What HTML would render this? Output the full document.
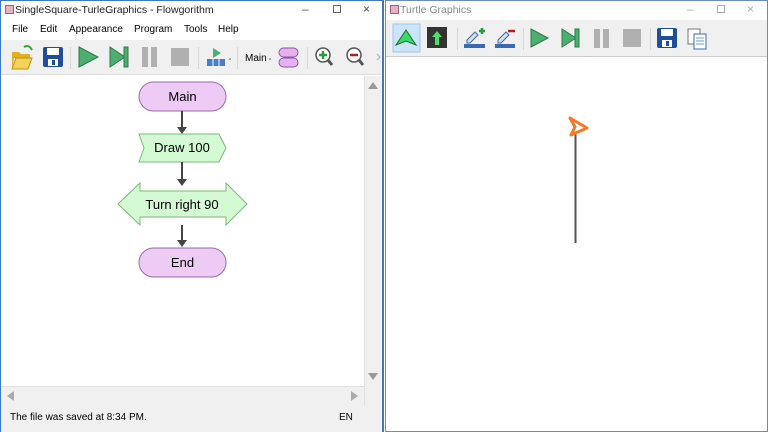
<!DOCTYPE html>
<html><head><meta charset="utf-8"><style>
*{margin:0;padding:0;box-sizing:border-box}
body{width:768px;height:432px;background:#fff;position:relative;overflow:hidden;font-family:"Liberation Sans",sans-serif;font-size:10px;color:#000}
.a{position:absolute}
.tb{background:#f0f0f0}
</style></head><body>
<!-- left window -->
<div class="a" style="left:0;top:0;width:384px;height:432px;border:1px solid #3c78c8;border-right:2px solid #3c78c8;background:#fff"></div>
<div class="a" style="left:5px;top:5px;width:9px;height:9px;background:#e8b0c0;border:1px solid #a06080"></div>
<div class="a" style="left:15px;top:4px;font-size:10.5px;color:#222">SingleSquare-TurleGraphics - Flowgorithm</div>
<div class="a" style="left:302px;top:2px;color:#555;font-size:12px">–</div>
<div class="a" style="left:333px;top:5px;width:8px;height:8px;border:1px solid #666"></div>
<div class="a" style="left:363px;top:2px;color:#555;font-size:12px">×</div>
<div class="a" style="left:12px;top:24px">File</div>
<div class="a" style="left:40px;top:24px">Edit</div>
<div class="a" style="left:69px;top:24px">Appearance</div>
<div class="a" style="left:134px;top:24px">Program</div>
<div class="a" style="left:184px;top:24px">Tools</div>
<div class="a" style="left:218px;top:24px">Help</div>
<div class="a tb" style="left:1px;top:40px;width:381px;height:35px;border-bottom:1px solid #ddd"></div>
<svg class="a" style="left:0;top:40px" width="382" height="34">
<path d="M12 12h7l2 2h9v4H14l-2 11z" fill="#e0b020"/><path d="M12 29l4-11h16l-4 11z" fill="#f4d35a" stroke="#c09010"/>
<path d="M24 7q5-3 8 3" stroke="#3a3" stroke-width="2" fill="none"/>
<rect x="43" y="7" width="20" height="20" rx="2" fill="#1f4f9a"/><rect x="47" y="8" width="12" height="7" fill="#fff"/><rect x="48" y="19" width="10" height="7" fill="#fff"/><rect x="52" y="20" width="3" height="5" fill="#1f4f9a"/>
<line x1="70.5" y1="7" x2="70.5" y2="29" stroke="#d8d8d8"/>
<path d="M79 7l19 10-19 10z" fill="#4caf70" stroke="#2a7a45"/>
<path d="M110 7l15 10-15 10z" fill="#4caf70" stroke="#2a7a45"/><rect x="124" y="7" width="4" height="20" fill="#4caf70" stroke="#2a7a45"/>
<rect x="142" y="7" width="6" height="20" fill="#b0b0b0"/><rect x="151" y="7" width="6" height="20" fill="#b0b0b0"/>
<rect x="171" y="8" width="18" height="18" fill="#b0b0b0"/>
<line x1="198.5" y1="7" x2="198.5" y2="29" stroke="#d8d8d8"/>
<path d="M213 8l8 5-8 5z" fill="#4caf70"/><rect x="207" y="19" width="18" height="7" fill="#4a7ec8"/><path d="M213 19v7M219 19v7" stroke="#fff"/>
<circle cx="230" cy="19" r="0.8" fill="#555"/>
<line x1="237.5" y1="7" x2="237.5" y2="29" stroke="#d8d8d8"/>
<text x="245" y="21" font-size="10" font-family="Liberation Sans">Main</text><circle cx="270" cy="19" r="0.8" fill="#555"/>
<rect x="279" y="8" width="19" height="9" rx="4.5" fill="#e8b0f0" stroke="#8a5aa0"/><rect x="279" y="18" width="19" height="9" rx="4.5" fill="#e8b0f0" stroke="#8a5aa0"/>
<line x1="307.5" y1="7" x2="307.5" y2="29" stroke="#d8d8d8"/>
<circle cx="323" cy="15" r="7" fill="#fff" stroke="#555" stroke-width="1.5"/><path d="M328 20l4 5" stroke="#555" stroke-width="3"/><path d="M319 15h8M323 11v8" stroke="#2a9a40" stroke-width="2.5"/>
<circle cx="354" cy="15" r="7" fill="#fff" stroke="#555" stroke-width="1.5"/><path d="M359 20l4 5" stroke="#555" stroke-width="3"/><path d="M350 15h8" stroke="#b02020" stroke-width="2.5"/>
<path d="M377 14l3 3-3 3" stroke="#aaa" fill="none"/>
</svg>
<!-- scrollbars -->
<div class="a tb" style="left:364px;top:76px;width:18px;height:329px;border-left:1px solid #e0e0e0"></div>
<div class="a" style="left:368px;top:82px;width:0;height:0;border-left:5px solid transparent;border-right:5px solid transparent;border-bottom:7px solid #999"></div>
<div class="a" style="left:368px;top:373px;width:0;height:0;border-left:5px solid transparent;border-right:5px solid transparent;border-top:7px solid #999"></div>
<div class="a tb" style="left:1px;top:386px;width:363px;height:19px;border-top:1px solid #e0e0e0"></div>
<div class="a" style="left:7px;top:391px;width:0;height:0;border-top:5px solid transparent;border-bottom:5px solid transparent;border-right:7px solid #aaa"></div>
<div class="a" style="left:351px;top:391px;width:0;height:0;border-top:5px solid transparent;border-bottom:5px solid transparent;border-left:7px solid #aaa"></div>
<div class="a tb" style="left:1px;top:405px;width:381px;height:27px"></div>
<div class="a" style="left:10px;top:412px">The file was saved at 8:34 PM.</div>
<div class="a" style="left:339px;top:412px">EN</div>
<!-- flowchart -->
<svg class="a" style="left:0;top:0" width="364" height="386" font-family="Liberation Sans" font-size="13">
<rect x="139" y="82" width="87" height="29" rx="14.5" fill="#eecbf5" stroke="#9a6aa8"/>
<text x="182.5" y="101" text-anchor="middle">Main</text>
<path d="M182 111v20" stroke="#444" stroke-width="2"/><path d="M177 127l5 7 5-7z" fill="#444"/>
<path d="M139 134h80l7 14-7 14h-80l5-14z" fill="#d4fad4" stroke="#7ab87a"/>
<text x="182" y="152" text-anchor="middle">Draw 100</text>
<path d="M182 162v21" stroke="#444" stroke-width="2"/><path d="M177 179l5 7 5-7z" fill="#444"/>
<path d="M118 204l22-21v8h86v-8l21 21-21 21v-8h-86v8z" fill="#d4fad4" stroke="#7ab87a"/>
<text x="182" y="209" text-anchor="middle">Turn right 90</text>
<path d="M182 225v17" stroke="#444" stroke-width="2"/><path d="M177 240l5 7 5-7z" fill="#444"/>
<rect x="139" y="248" width="87" height="29" rx="14.5" fill="#eecbf5" stroke="#9a6aa8"/>
<text x="182.5" y="267" text-anchor="middle">End</text>
</svg>
<!-- right window -->
<div class="a" style="left:385px;top:0;width:383px;height:432px;border:1px solid #6a8cc0;background:#fff"></div>
<div class="a" style="left:390px;top:5px;width:9px;height:9px;background:#e8b0c0;border:1px solid #a06080"></div>
<div class="a" style="left:400px;top:4px;font-size:10.5px;color:#888">Turtle Graphics</div>
<div class="a" style="left:687px;top:2px;color:#aaa;font-size:12px">–</div>
<div class="a" style="left:717px;top:5px;width:8px;height:8px;border:1px solid #aaa"></div>
<div class="a" style="left:747px;top:2px;color:#aaa;font-size:12px">×</div>
<div class="a tb" style="left:386px;top:20px;width:381px;height:37px;border-bottom:1px solid #ccc"></div>
<svg class="a" style="left:386px;top:20px" width="381" height="37">
<rect x="7" y="4" width="27" height="28" fill="#cce4f7" stroke="#99c9ef"/>
<path d="M20 10l-10 15 10-4 10 4z" fill="#33dd66" stroke="#206a30"/>
<rect x="41" y="7" width="20" height="21" fill="#333"/><path d="M51 11l-5 6h3v8h4v-8h3z" fill="#4dde6a"/>
<line x1="71.5" y1="8" x2="71.5" y2="30" stroke="#d8d8d8"/>
<path d="M81 20l8-8 3 3-8 8h-3z" fill="#ddd" stroke="#3a6ab0"/><path d="M93 11h6M96 8v6" stroke="#2a9a40" stroke-width="2.5"/><rect x="78" y="24" width="21" height="4" fill="#3a6ab0"/>
<path d="M112 20l8-8 3 3-8 8h-3z" fill="#ddd" stroke="#3a6ab0"/><path d="M122 11h7" stroke="#b02020" stroke-width="2.5"/><rect x="109" y="24" width="20" height="4" fill="#3a6ab0"/>
<line x1="137.5" y1="8" x2="137.5" y2="30" stroke="#d8d8d8"/>
<path d="M145 9l17 9-17 9z" fill="#4caf70" stroke="#2a7a45"/>
<path d="M176 9l14 9-14 9z" fill="#4caf70" stroke="#2a7a45"/><rect x="189" y="9" width="4" height="18" fill="#4caf70" stroke="#2a7a45"/>
<rect x="208" y="9" width="6" height="19" fill="#b0b0b0"/><rect x="217" y="9" width="6" height="19" fill="#b0b0b0"/>
<rect x="237" y="9" width="18" height="18" fill="#b0b0b0"/>
<line x1="264.5" y1="8" x2="264.5" y2="30" stroke="#d8d8d8"/>
<rect x="271" y="8" width="20" height="20" rx="2" fill="#1f4f9a"/><rect x="275" y="9" width="12" height="7" fill="#fff"/><rect x="276" y="20" width="10" height="7" fill="#fff"/><rect x="280" y="21" width="3" height="5" fill="#1f4f9a"/>
<rect x="302" y="9" width="12" height="15" fill="#fff" stroke="#777"/><rect x="308" y="14" width="12" height="15" fill="#fff" stroke="#3a6ab0"/><path d="M310 18h8M310 21h8M310 24h8" stroke="#6a9ad0"/>
</svg>
<svg class="a" style="left:386px;top:58px" width="381" height="373">
<path d="M189.5 75v110" stroke="#555" stroke-width="2"/>
<path d="M184 60l17 10-16 7 4-8z" fill="none" stroke="#f47a2a" stroke-width="3" stroke-linejoin="round"/>
</svg>
</body></html>
